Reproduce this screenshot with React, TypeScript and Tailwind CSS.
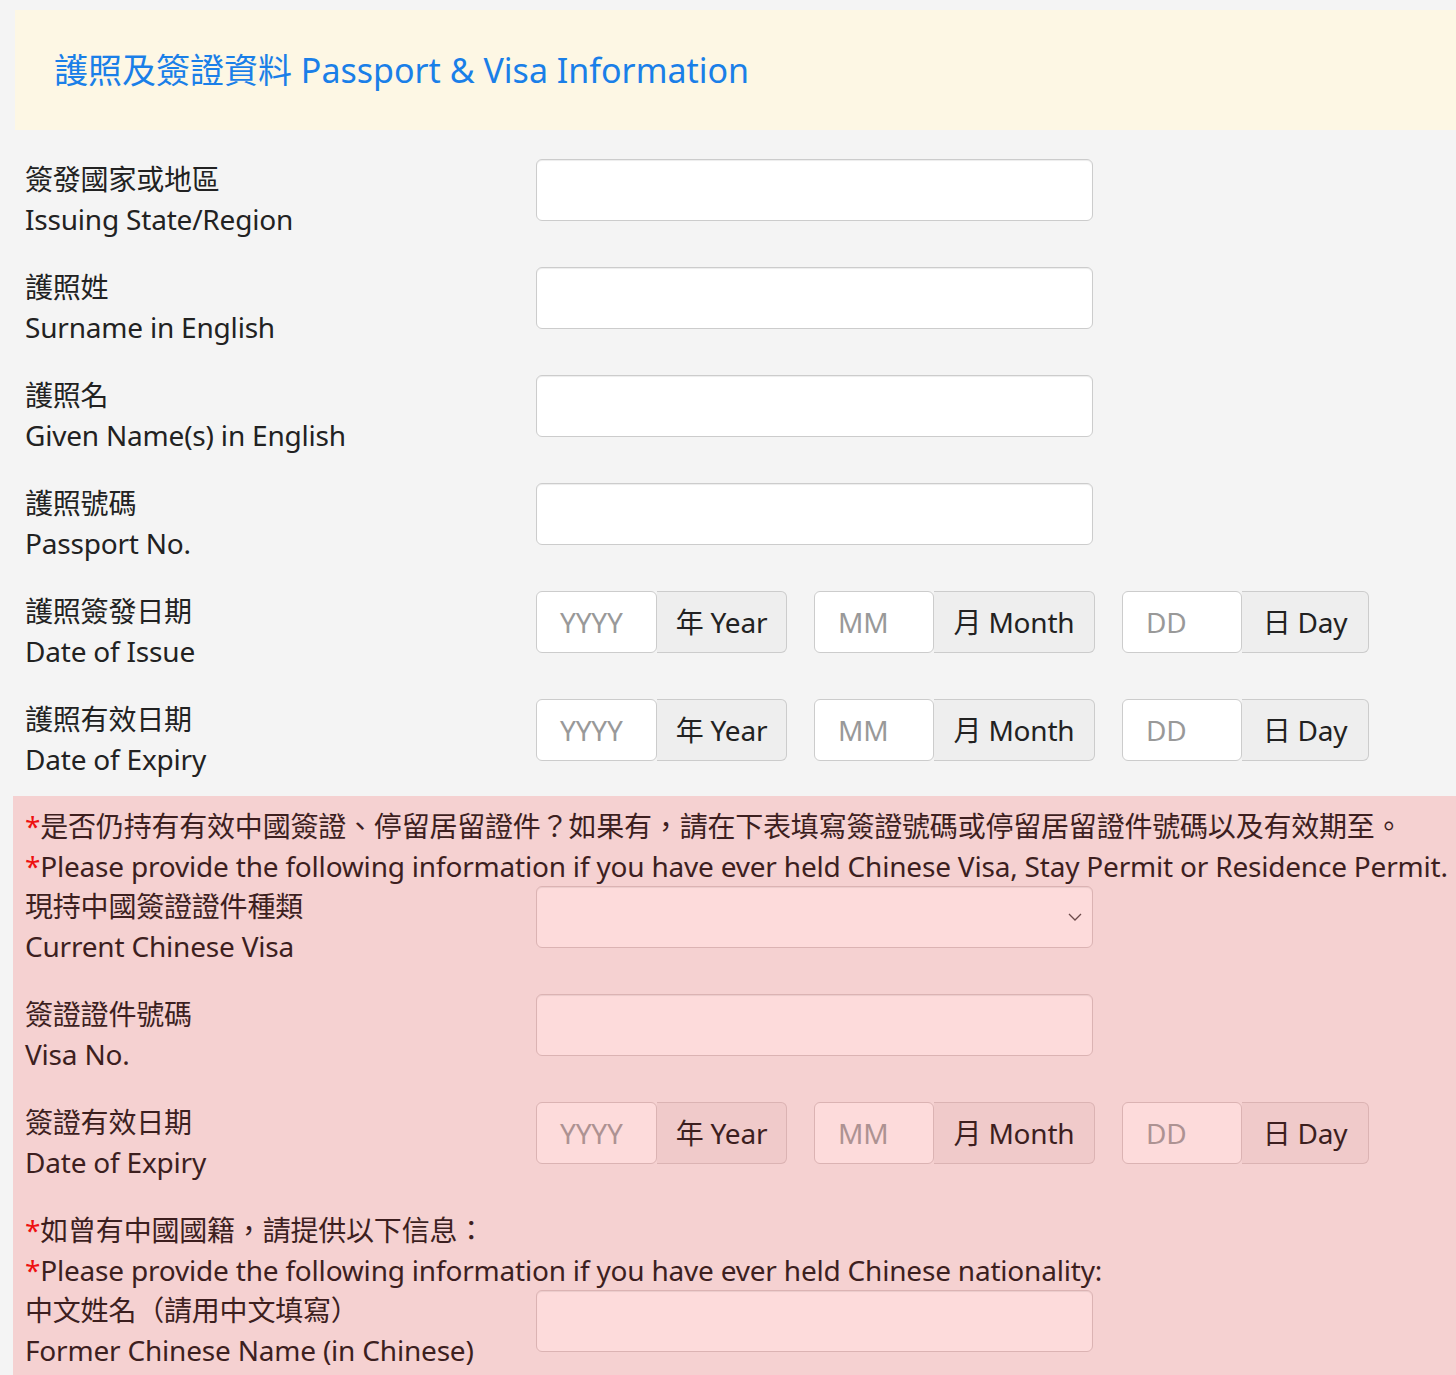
import React from "react";

const FONT = "font-['Noto_Sans','Noto_Sans_CJK_TC',sans-serif]";

type Theme = "gray" | "pink";

const TextInput = ({ theme }: { theme: Theme }) => (
  <div
    className={`h-[62px] w-[557px] rounded-[6px] border ${
      theme === "gray" ? "border-[#cccccc] bg-white" : "border-[#dbb3b3] bg-[#fddbdb]"
    } shadow-[inset_0_1px_1px_rgba(0,0,0,0.075)]`}
  />
);

const SelectInput = () => (
  <div className="flex h-[62px] w-[557px] items-center justify-end rounded-[6px] border border-[#dbb3b3] bg-[#fddbdb] pr-[10px] shadow-[inset_0_1px_1px_rgba(0,0,0,0.075)]">
    <svg width="14" height="8" viewBox="0 0 14 8" fill="none">
      <path d="M1 1l6 6 6-6" stroke="#6b4a4a" strokeWidth="1.3" />
    </svg>
  </div>
);

const DatePart = ({
  theme,
  placeholder,
  label,
  inputW,
  addonW,
}: {
  theme: Theme;
  placeholder: string;
  label: string;
  inputW: string;
  addonW: string;
}) => {
  const pink = theme === "pink";
  return (
    <div className="flex h-[62px]">
      <div
        className={`flex items-center ${inputW} rounded-[6px] border pl-[23px] ${
          pink ? "border-[#dbb3b3] bg-[#fddbdb] text-[#ad9292]" : "border-[#cccccc] bg-white text-[#999999]"
        }`}
      >
        {placeholder}
      </div>
      <div
        className={`flex items-center justify-center ${addonW} rounded-r-[6px] border border-l-0 ${
          pink ? "border-[#dbb3b3] bg-[#f0caca]" : "border-[#cccccc] bg-[#eeeeee]"
        }`}
      >
        {label}
      </div>
    </div>
  );
};

const DateGroup = ({ theme }: { theme: Theme }) => (
  <div className="flex gap-[27px]">
    <DatePart theme={theme} placeholder="YYYY" label="年 Year" inputW="w-[121px]" addonW="w-[130px]" />
    <DatePart theme={theme} placeholder="MM" label="月 Month" inputW="w-[120px]" addonW="w-[161px]" />
    <DatePart theme={theme} placeholder="DD" label="日 Day" inputW="w-[120px]" addonW="w-[127px]" />
  </div>
);

const Row = ({ zh, en, children }: { zh: string; en: string; children: React.ReactNode }) => (
  <div className="mb-[28px] flex">
    <div className="w-[511px] shrink-0">
      <div>{zh}</div>
      <div>{en}</div>
    </div>
    <div>{children}</div>
  </div>
);

const Note = ({ children }: { children: React.ReactNode }) => (
  <div className="whitespace-nowrap">
    <span className="text-[#ee1111]">*</span>
    {children}
  </div>
);

export default function App() {
  return (
    <div
      lang="zh-Hant"
      className={`min-h-screen overflow-hidden bg-[#f4f4f4] pl-[15px] pt-[10px] text-[28px] leading-[40px] tracking-[-0.2px] text-[#222222] ${FONT}`}
    >
      <div className="flex h-[120px] items-center bg-[#fdf7e4] pl-[39px]">
        <h3 className="text-[34px] tracking-normal text-[#1a7fe8]">護照及簽證資料 Passport &amp; Visa Information</h3>
      </div>

      <div className="pl-[10px] pt-[29px]">
        <Row zh="簽發國家或地區" en="Issuing State/Region">
          <TextInput theme="gray" />
        </Row>
        <Row zh="護照姓" en="Surname in English">
          <TextInput theme="gray" />
        </Row>
        <Row zh="護照名" en="Given Name(s) in English">
          <TextInput theme="gray" />
        </Row>
        <Row zh="護照號碼" en="Passport No.">
          <TextInput theme="gray" />
        </Row>
        <Row zh="護照簽發日期" en="Date of Issue">
          <DateGroup theme="gray" />
        </Row>
        <Row zh="護照有效日期" en="Date of Expiry">
          <DateGroup theme="gray" />
        </Row>
      </div>

      <div className="-ml-[2px] mt-[-11px] bg-[#f5d1d1] pb-[20px] pl-[12px] pt-[10px] text-[#3d1f1f]">
        <Note>是否仍持有有效中國簽證、停留居留證件？如果有，請在下表填寫簽證號碼或停留居留證件號碼以及有效期至。</Note>
        <Note>Please provide the following information if you have ever held Chinese Visa, Stay Permit or Residence Permit.</Note>
        <Row zh="現持中國簽證證件種類" en="Current Chinese Visa">
          <SelectInput />
        </Row>
        <Row zh="簽證證件號碼" en="Visa No.">
          <TextInput theme="pink" />
        </Row>
        <Row zh="簽證有效日期" en="Date of Expiry">
          <DateGroup theme="pink" />
        </Row>
        <Note>如曾有中國國籍，請提供以下信息：</Note>
        <Note>Please provide the following information if you have ever held Chinese nationality:</Note>
        <Row zh="中文姓名（請用中文填寫）" en="Former Chinese Name (in Chinese)">
          <TextInput theme="pink" />
        </Row>
      </div>
    </div>
  );
}
